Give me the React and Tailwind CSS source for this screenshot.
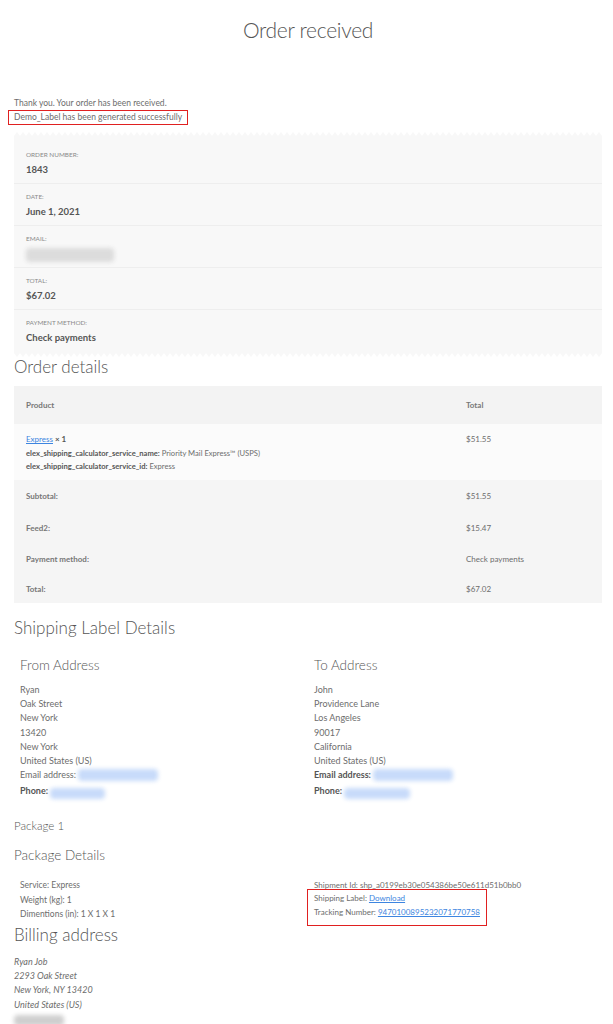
import React from 'react';

const font = { fontFamily: 'Lato, "Noto Sans", sans-serif' };

// saw-tooth edge of the order overview panel
function Zigzag({ flip }) {
  const id = flip ? 'zz-bottom' : 'zz-top';
  return (
    <svg className="block w-full h-[4px]" aria-hidden="true">
      <defs>
        <pattern id={id} width="6" height="4" patternUnits="userSpaceOnUse">
          <path d={flip ? 'M0 0 L3 4 L6 0 Z' : 'M0 4 L3 0 L6 4 Z'} fill="#f8f8f8" />
        </pattern>
      </defs>
      <rect width="100%" height="4" fill={`url(#${id})`} />
    </svg>
  );
}

function Blur({ className }) {
  return <span className={`inline-block align-middle rounded-sm blur-[2px] ${className}`} />;
}

const overview = [
  { label: 'Order number:', value: '1843' },
  { label: 'Date:', value: 'June 1, 2021' },
  { label: 'Email:', value: null },
  { label: 'Total:', value: '$67.02' },
  { label: 'Payment method:', value: 'Check payments' },
];

const totals = [
  ['Subtotal:', '$51.55'],
  ['Feed2:', '$15.47'],
  ['Payment method:', 'Check payments'],
  ['Total:', '$67.02'],
];

const fromLines = ['Ryan', 'Oak Street', 'New York', '13420', 'New York', 'United States (US)'];
const toLines = ['John', 'Providence Lane', 'Los Angeles', '90017', 'California', 'United States (US)'];

function Address({ title, lines, boldEmail, phoneWidth }) {
  return (
    <div className="pl-[6px]">
      <h3 className="text-[13.5px] leading-[16px] font-light text-[#555]">{title}</h3>
      <div className="mt-[10px] text-[9px] leading-[14.2px] text-[#6d6d6d]">
        {lines.map((l, i) => (
          <div key={i}>{l}</div>
        ))}
        <div className="flex items-center">
          <span className={boldEmail ? 'font-bold text-[#555]' : ''}>Email address:</span>
          <Blur className="ml-[2px] w-[80px] h-[12px] bg-[#c8dbfa]" />
        </div>
        <div className="flex items-center">
          <span className="font-bold text-[#555]">Phone:</span>
          <Blur className={`ml-[2px] h-[11px] mt-[6px] bg-[#c8dbfa] ${phoneWidth}`} />
        </div>
      </div>
    </div>
  );
}

export default function App() {
  return (
    <div className="w-[613px] min-h-[1024px] bg-white pl-[14px] pr-[11px] overflow-hidden" style={font}>
      {/* 标题 */}
      <h1 className="pt-[16px] text-center text-[21px] leading-[28px] font-light text-[#555] tracking-[-0.3px]">
        Order received
      </h1>

      <div className="mt-[52px] text-[8.5px] leading-[14px] text-[#6d6d6d]">
        <p>Thank you. Your order has been received.</p>
        <p>
          <span className="inline-block -ml-[6px] px-[5px] border border-[#e02020] leading-[13px]">
            Demo_Label has been generated successfully
          </span>
        </p>
      </div>

      {/* 订单概览 */}
      <div className="mt-[7px]">
        <Zigzag />
        <div className="bg-[#f8f8f8]">
          {overview.map((row, i) => (
            <div
              key={row.label}
              className={`px-[12px] ${
                i === 0 ? 'pt-[14px] h-[48px]' : i === overview.length - 1 ? 'pt-[8px] h-[43px]' : 'pt-[8px] h-[42px]'
              } ${i < overview.length - 1 ? 'border-b border-[#eeeeee]' : ''}`}
            >
              <div className="text-[6.4px] leading-[10px] uppercase text-[#8a8a8a]">{row.label}</div>
              <div className="mt-[3px] text-[9.5px] leading-[14px] font-bold text-[#555]">
                {row.value ?? <Blur className="w-[88px] h-[14px] mt-[1px] bg-[#dcdcdc]" />}
              </div>
            </div>
          ))}
        </div>
        <Zigzag flip />
      </div>

      {/* 订单详情 */}
      <h2 className="text-[17px] leading-[20px] font-light text-[#555]">Order details</h2>
      <div className="mt-[9px] text-[8px] text-[#6d6d6d]">
        <div className="flex h-[38px] items-center bg-[#f3f3f3] font-bold text-[#777]">
          <div className="w-[452px] pl-[12px]">Product</div>
          <div>Total</div>
        </div>
        <div className="flex h-[56px] bg-[#fbfbfb] pt-[9px]">
          <div className="w-[452px] pl-[12px] leading-[13.5px]">
            <div>
              <a className="text-[#3d85e0] underline">Express</a>
              <span className="font-bold text-[#555]"> × 1</span>
            </div>
            <div className="text-[7.6px]">
              <span className="font-bold text-[#555]">elex_shipping_calculator_service_name:</span> Priority Mail Express™ (USPS)
            </div>
            <div className="text-[7.6px]">
              <span className="font-bold text-[#555]">elex_shipping_calculator_service_id:</span> Express
            </div>
          </div>
          <div className="leading-[13.5px]">$51.55</div>
        </div>
        <div className="bg-[#f5f5f5]">
          {totals.map(([k, v], i) => (
            <div key={k} className={`flex items-center ${i === 0 ? 'h-[32px]' : i === 3 ? 'h-[29px]' : 'h-[31px]'}`}>
              <div className="w-[452px] pl-[12px] font-bold text-[#777]">{k}</div>
              <div>{v}</div>
            </div>
          ))}
        </div>
      </div>

      {/* 运单详情 */}
      <h2 className="mt-[15px] text-[17px] leading-[20px] font-light text-[#555]">Shipping Label Details</h2>
      <div className="mt-[19px] grid grid-cols-2">
        <Address title="From Address" lines={fromLines} phoneWidth="w-[55px]" />
        <Address title="To Address" lines={toLines} boldEmail phoneWidth="w-[66px]" />
      </div>

      <h3 className="mt-[19px] text-[11.5px] leading-[16px] font-light text-[#555]">Package 1</h3>
      <h3 className="mt-[13px] text-[13.5px] leading-[16px] font-light text-[#555]">Package Details</h3>

      <div className="mt-[15px] grid grid-cols-2 text-[8px] leading-[14.5px] text-[#6d6d6d]">
        <div className="pl-[6px] text-[8.5px]">
          <div>Service: Express</div>
          <div>Weight (kg): 1</div>
          <div>Dimentions (in): 1 X 1 X 1</div>
        </div>
        <div className="pl-[6px]">
          <div>Shipment Id: shp_a0199eb30e054386be50e611d51b0bb0</div>
          <div className="-mt-[4px] -ml-[7px] w-[180px] border border-[#e02020] pl-[6px] pt-[1px] pb-[5px] whitespace-nowrap">
            <div>
              Shipping Label: <a className="text-[#3d85e0] underline">Download</a>
            </div>
            <div>
              Tracking Number: <a className="text-[#3d85e0] underline">9470100895232071770758</a>
            </div>
          </div>
        </div>
      </div>

      {/* 账单地址 */}
      <h2 className="-mt-[2px] text-[17px] leading-[22px] font-light text-[#555]">Billing address</h2>
      <div className="mt-[9px] text-[9px] leading-[14.2px] italic text-[#6d6d6d]">
        <div>Ryan Job</div>
        <div>2293 Oak Street</div>
        <div>New York, NY 13420</div>
        <div>United States (US)</div>
        <Blur className="mt-[3px] w-[50px] h-[11px] bg-[#cfcfcf]" />
      </div>
    </div>
  );
}
